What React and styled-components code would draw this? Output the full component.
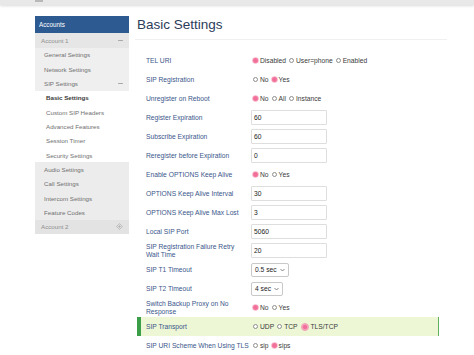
import React from "react";
import styled, { createGlobalStyle } from "styled-components";

const GlobalStyle = createGlobalStyle`
  html, body {
    margin: 0;
    padding: 0;
    background: #fff;
    font-family: "Liberation Sans", Arial, sans-serif;
  }
`;

const TopStrip = styled.div`
  height: 5px;
  background: #e8e8e8;
  box-shadow: 0 1px 3px rgba(0, 0, 0, 0.15);
  position: relative;
`;

const TopTab = styled.span`
  position: absolute;
  left: 35px;
  top: 0;
  width: 8px;
  height: 2px;
  background: #b8b8b8;
`;

const Page = styled.div`
  display: flex;
  align-items: flex-start;
`;

const Sidebar = styled.nav`
  margin: 11px 0 0 35px;
  width: 94px;
  font-size: 6.2px;
`;

const SideHeader = styled.div`
  height: 17.3px;
  background: #2d5a91;
  color: #fff;
  display: flex;
  align-items: center;
  padding-left: 4px;
  font-size: 6.3px;
`;

const SideItem = styled.div`
  height: 14.33px;
  display: flex;
  align-items: center;
  justify-content: space-between;
  padding: 0 6px 0 ${(p) => p.$indent}px;
  background: ${(p) => p.$bg};
  color: ${(p) => (p.$bold ? "#3a3a3a" : p.$muted ? "#8e8e8e" : "#707070")};
  font-weight: ${(p) => (p.$bold ? "bold" : "normal")};
`;

const Dash = styled.span`
  width: 5px;
  height: 1.5px;
  background: #a8a8a8;
  border-radius: 1px;
`;

const Main = styled.main`
  margin-left: 6px;
  width: 312px;
`;

const Header = styled.div`
  height: 35px;
  border-bottom: 1px solid #f0f0f0;
  display: flex;
  align-items: center;
  padding: 4px 0 0 2px;
  box-sizing: border-box;
`;

const Title = styled.h1`
  margin: 0;
  font-weight: normal;
  font-size: 13.5px;
  color: #2b3d5a;
`;

const Rows = styled.div`
  margin: 11px 0 0 2px;
  width: 302px;
`;

const Row = styled.div`
  height: 19px;
  display: flex;
  align-items: center;
  box-sizing: border-box;
  padding-left: ${(p) => (p.$active ? 5 : 9)}px;
  font-size: 6.7px;
  background: ${(p) => (p.$active ? "#edf7d6" : "transparent")};
  border-left: ${(p) => (p.$active ? "4px solid #3a9f48" : "none")};
  border-right: ${(p) => (p.$active ? "1px solid #5fb060" : "none")};
`;

const Label = styled.div`
  width: 100px;
  margin-right: 5px;
  flex: none;
  color: #3a568a;
  line-height: 1.1;
  white-space: ${(p) => (p.$nowrap ? "nowrap" : "normal")};
`;

const Value = styled.div`
  display: flex;
  align-items: center;
  color: #3a3a3a;
`;

const RadioDot = styled.span`
  width: ${(p) => (p.$focus ? 8 : 5)}px;
  height: ${(p) => (p.$focus ? 8 : 5)}px;
  border-radius: 50%;
  box-sizing: border-box;
  margin: 0 2px 0 ${(p) => (p.$first ? 2 : 3)}px;
  flex: none;
  background: ${(p) =>
    p.$on ? "radial-gradient(circle, #f1709a 0 40%, #f7a8c0 62%, #fcdbe6 100%)" : "#fff"};
  border: ${(p) =>
    p.$focus ? "1.5px solid #f29ab2" : p.$on ? "none" : "0.8px solid #8e8e8e"};
  transform: ${(p) => (p.$on && !p.$focus ? "scale(1.3)" : "none")};
`;

const TextBox = styled.div`
  width: 76px;
  height: 14.5px;
  border: 1px solid #dedede;
  border-radius: 1px;
  box-sizing: border-box;
  display: flex;
  align-items: center;
  padding-left: 2px;
  color: #222;
`;

const SelectBox = styled.div`
  height: 14px;
  border: 1px solid #c8c8c8;
  border-radius: 2px;
  box-sizing: border-box;
  display: flex;
  align-items: center;
  gap: 3px;
  padding: 0 3px;
  color: #222;
`;

const Radios = ({ options, selected, focus }) => (
  <Value>
    {options.map((o, i) => (
      <React.Fragment key={o}>
        <RadioDot $first={i === 0} $on={o === selected} $focus={focus && o === selected} />
        <span>{o}</span>
      </React.Fragment>
    ))}
  </Value>
);

const Chevron = () => (
  <svg width="5" height="4" viewBox="0 0 5 4">
    <path d="M0.5 1 L2.5 3 L4.5 1" fill="none" stroke="#555" strokeWidth="0.7" />
  </svg>
);

const GearIcon = () => (
  <svg width="7" height="7" viewBox="0 0 7 7">
    <path d="M3.5 0.5 L6.5 3.5 L3.5 6.5 L0.5 3.5 Z" fill="none" stroke="#b0b0b0" strokeWidth="0.7" />
    <path d="M3.5 1.8 V5.2 M1.8 3.5 H5.2" stroke="#b0b0b0" strokeWidth="0.7" />
  </svg>
);

const sideItems = [
  { text: "Account 1", indent: 6, bg: "#e6e6e6", muted: true, dash: true },
  { text: "General Settings", indent: 9, bg: "#efefef" },
  { text: "Network Settings", indent: 9, bg: "#efefef" },
  { text: "SIP Settings", indent: 9, bg: "#efefef", dash: true },
  { text: "Basic Settings", indent: 11, bg: "#fff", bold: true },
  { text: "Custom SIP Headers", indent: 11, bg: "#fff" },
  { text: "Advanced Features", indent: 11, bg: "#fff" },
  { text: "Session Timer", indent: 11, bg: "#fff" },
  { text: "Security Settings", indent: 11, bg: "#fff" },
  { text: "Audio Settings", indent: 9, bg: "#ececec" },
  { text: "Call Settings", indent: 9, bg: "#ececec" },
  { text: "Intercom Settings", indent: 9, bg: "#ececec" },
  { text: "Feature Codes", indent: 9, bg: "#ececec" },
  { text: "Account 2", indent: 6, bg: "#e3e3e3", muted: true, gear: true },
];

const settings = [
  { label: "TEL URI", radios: ["Disabled", "User=phone", "Enabled"], value: "Disabled" },
  { label: "SIP Registration", radios: ["No", "Yes"], value: "Yes" },
  { label: "Unregister on Reboot", radios: ["No", "All", "Instance"], value: "No" },
  { label: "Register Expiration", text: "60" },
  { label: "Subscribe Expiration", text: "60" },
  { label: "Reregister before Expiration", text: "0" },
  { label: "Enable OPTIONS Keep Alive", radios: ["No", "Yes"], value: "No" },
  { label: "OPTIONS Keep Alive Interval", text: "30" },
  { label: "OPTIONS Keep Alive Max Lost", text: "3" },
  { label: "Local SIP Port", text: "5060" },
  { label: "SIP Registration Failure Retry Wait Time", text: "20" },
  { label: "SIP T1 Timeout", select: "0.5 sec" },
  { label: "SIP T2 Timeout", select: "4 sec" },
  { label: "Switch Backup Proxy on No Response", radios: ["No", "Yes"], value: "No" },
  { label: "SIP Transport", radios: ["UDP", "TCP", "TLS/TCP"], value: "TLS/TCP", active: true },
  { label: "SIP URI Scheme When Using TLS", radios: ["sip", "sips"], value: "sips", nowrap: true },
];

export default function App() {
  return (
    <>
      <GlobalStyle />
      <TopStrip>
        <TopTab />
      </TopStrip>
      <Page>
        <Sidebar>
          <SideHeader>Accounts</SideHeader>
          {sideItems.map((s) => (
            <SideItem key={s.text} $indent={s.indent} $bg={s.bg} $bold={s.bold} $muted={s.muted}>
              <span>{s.text}</span>
              {s.dash && <Dash />}
              {s.gear && <GearIcon />}
            </SideItem>
          ))}
        </Sidebar>
        <Main>
          <Header>
            <Title>Basic Settings</Title>
          </Header>
          <Rows>
            {settings.map((s) => (
              <Row key={s.label} $active={s.active}>
                <Label $nowrap={s.nowrap}>{s.label}</Label>
                {s.radios && <Radios options={s.radios} selected={s.value} focus={s.active} />}
                {s.text && <TextBox>{s.text}</TextBox>}
                {s.select && (
                  <SelectBox>
                    {s.select}
                    <Chevron />
                  </SelectBox>
                )}
              </Row>
            ))}
          </Rows>
        </Main>
      </Page>
    </>
  );
}
